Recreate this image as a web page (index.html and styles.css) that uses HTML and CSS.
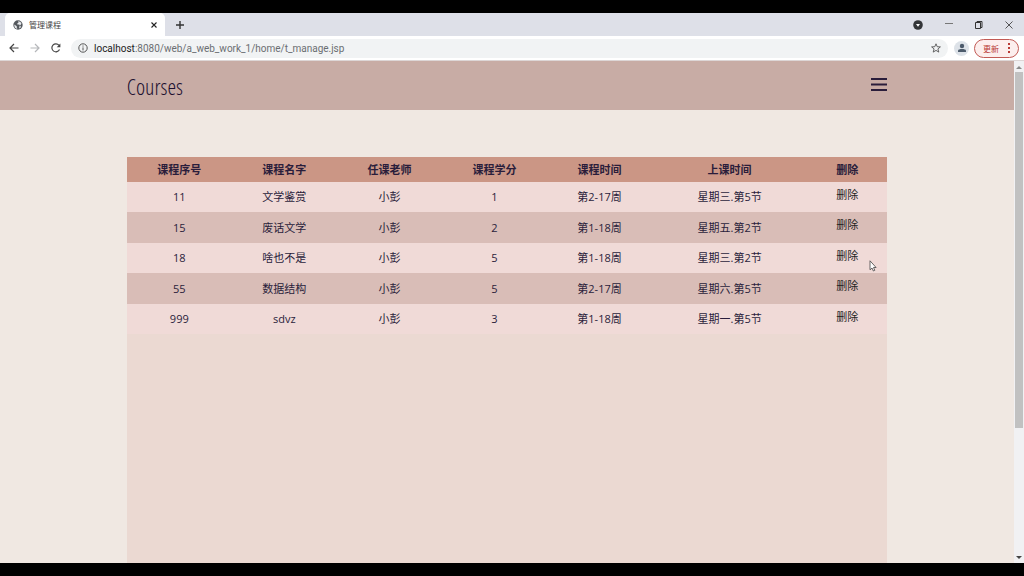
FILE: index.html
```html
<!DOCTYPE html>
<html lang="zh-CN">
<head>
  <meta charset="UTF-8">
  <title>管理课程</title>
  <link rel="stylesheet" href="styles.css">
</head>
<body>
  <!-- 标签栏 -->
  <div class="tabs">
    <div class="tab">
      <svg class="globe" viewBox="0 0 16 16"><circle cx="8" cy="8" r="7.5" fill="#54585d"/><path d="M2 7l4 3v2l1 2C4 14 2 11 2 7zM8 2c3 0 5 1.500 5.500 4L11 9l-1-2H7V5l2-1zM10 10l3 0-1.500 3H10z" fill="#e9ebee"/></svg>
      <span class="tab-title">管理课程</span>
      <button class="icon-btn" aria-label="关闭标签页"><svg width="6" height="6" viewBox="0 0 6 6"><path d="M.5.5l5 5M5.500.5l-5 5" stroke="#222" stroke-width="1.100"/></svg></button>
    </div>
    <button class="icon-btn new-tab" aria-label="新标签页"><svg width="8" height="8" viewBox="0 0 8 8"><path d="M4 0v8M0 4h8" stroke="#333" stroke-width="1.400"/></svg></button>
    <div class="window-btns">
      <button class="icon-btn" aria-label="搜索标签页"><svg width="10" height="10" viewBox="0 0 10 10"><circle cx="5" cy="5" r="4.800" fill="#333538"/><path d="M3 4h4L5 6.800z" fill="#fff"/></svg></button>
      <button class="icon-btn" aria-label="最小化"><svg width="8" height="8" viewBox="0 0 8 8"><path d="M0 2.500h8" stroke="#777"/></svg></button>
      <button class="icon-btn" aria-label="还原"><svg width="8" height="8" viewBox="0 0 8 8"><path d="M.5 1.500h5v6h-5zM2 1.500V.5h5v6H5.500" fill="none" stroke="#333"/></svg></button>
      <button class="icon-btn" aria-label="关闭"><svg width="8" height="8" viewBox="0 0 8 8"><path d="M.5.5l7 7M7.500.5l-7 7" stroke="#444" stroke-width=".9"/></svg></button>
    </div>
  </div>

  <!-- 地址栏 -->
  <div class="toolbar">
    <button class="icon-btn" aria-label="后退"><svg width="10" height="10" viewBox="0 0 10 10"><path d="M9.500 5H1M5 1L1 5l4 4" fill="none" stroke="#444" stroke-width="1.200"/></svg></button>
    <button class="icon-btn" aria-label="前进"><svg width="10" height="10" viewBox="0 0 10 10"><path d="M.5 5H9M5 1l4 4-4 4" fill="none" stroke="#b5b7ba" stroke-width="1.200"/></svg></button>
    <button class="icon-btn" aria-label="刷新"><svg width="10" height="10" viewBox="0 0 10 10"><path d="M8.500 6.500A4 4 0 1 1 8 2.300" fill="none" stroke="#444" stroke-width="1.200"/><path d="M9.400.5v3.700H5.700z" fill="#444"/></svg></button>
    <div class="address">
      <svg width="10" height="10" viewBox="0 0 10 10"><circle cx="5" cy="5" r="4.200" fill="none" stroke="#555"/><path d="M5 4.400v3M5 2.500v1.100" stroke="#555"/></svg>
      <a class="url" href="#"><span class="host">localhost</span>:8080/web/a_web_work_1/home/t_manage.jsp</a>
      <button class="icon-btn" aria-label="收藏"><svg width="10" height="10" viewBox="0 0 10 10"><path d="M5 .8l1.200 2.900 3.200.2-2.500 2 .9 3.200L5 7.400 2.200 9.100l.9-3.200-2.500-2 3.200-.2z" fill="none" stroke="#555" stroke-width=".9"/></svg></button>
    </div>
    <button class="icon-btn avatar" aria-label="用户"><svg width="10" height="10" viewBox="0 0 10 10"><circle cx="5" cy="3" r="2.200" fill="#4c5a6b"/><path d="M1 9V7.500C1 5.500 9 5.500 9 7.500V9z" fill="#4c5a6b"/></svg></button>
    <button class="update">更新<svg width="2" height="10" viewBox="0 0 2 10"><path d="M0 0h2v2H0zM0 4h2v2H0zM0 8h2v2H0z" fill="#b93a35"/></svg></button>
  </div>

  <div class="view">
    <div class="page">
      <header class="header">
        <div class="inner">
          <h1>Courses</h1>
          <button class="icon-btn" aria-label="菜单"><svg width="16" height="15" viewBox="0 0 16 15"><path d="M0 1h16M0 6.500h16M0 12h16" stroke="#2a1d3b" stroke-width="1.800"/></svg></button>
        </div>
      </header>
      <main class="content">
        <table>
          <colgroup>
            <col class="col" span="5">
            <col class="col-time">
            <col class="col-del">
          </colgroup>
          <thead>
            <tr><th>课程序号</th><th>课程名字</th><th>任课老师</th><th>课程学分</th><th>课程时间</th><th>上课时间</th><th>删除</th></tr>
          </thead>
          <tbody>
            <tr><td>11</td><td>文学鉴赏</td><td>小彭</td><td>1</td><td>第2-17周</td><td>星期三.第5节</td><td class="del"><a href="#">删除</a></td></tr>
            <tr><td>15</td><td>废话文学</td><td>小彭</td><td>2</td><td>第1-18周</td><td>星期五.第2节</td><td class="del"><a href="#">删除</a></td></tr>
            <tr><td>18</td><td>啥也不是</td><td>小彭</td><td>5</td><td>第1-18周</td><td>星期三.第2节</td><td class="del"><a href="#">删除</a></td></tr>
            <tr><td>55</td><td>数据结构</td><td>小彭</td><td>5</td><td>第2-17周</td><td>星期六.第5节</td><td class="del"><a href="#">删除</a></td></tr>
            <tr><td>999</td><td>sdvz</td><td>小彭</td><td>3</td><td>第1-18周</td><td>星期一.第5节</td><td class="del"><a href="#">删除</a></td></tr>
          </tbody>
        </table>
      </main>
    </div>
    <div class="scrollbar">
      <svg width="6" height="4" viewBox="0 0 6 4"><path d="M0 4l3-3 3 3z" fill="#8a8a8a"/></svg>
      <div class="track"><div class="thumb"></div></div>
      <svg width="6" height="4" viewBox="0 0 6 4"><path d="M0 0h6L3 3z" fill="#444"/></svg>
    </div>
  </div>

  <svg class="cursor" viewBox="0 0 8 12"><path d="M1 .8v9l2-1.800 1.400 3 1.400-.7-1.300-2.800h2.600z" fill="#fff" stroke="#444" stroke-width=".8"/></svg>
</body>
</html>
```
FILE: styles.css
```css
* { box-sizing: border-box; }
body {
  margin: 0;
  height: 100vh;
  display: flex;
  flex-direction: column;
  border-top: 13px solid #000;
  border-bottom: 13px solid #000;
  background: #fff;
  font-family: "Open Sans", "Noto Sans CJK SC", sans-serif;
  font-size: 11px;
  color: #2a1d3b;
  overflow: hidden;
}
a { color: inherit; text-decoration: none; }
svg { display: block; flex: none; }
button { font-family: inherit; cursor: pointer; }
.icon-btn { background: none; border: none; padding: 0; }

/* 标签栏 */
.tabs { display: flex; align-items: center; height: 23px; padding-left: 5px; background: #dee0e8; }
.tab {
  display: flex;
  align-items: center;
  gap: 6px;
  width: 160px;
  height: 23px;
  padding: 0 8px;
  background: #fff;
  border-radius: 5px 5px 0 0;
}
.globe { width: 10px; height: 10px; }
.tab-title { flex: 1; font-size: 8px; color: #444; }
.new-tab { margin-left: 11px; }
.window-btns { display: flex; align-items: center; gap: 22px; margin-left: auto; padding-right: 11px; }

/* 地址栏 */
.toolbar { display: flex; align-items: center; gap: 11px; height: 24px; padding: 0 5px 0 9px; background: #fff; }
.address {
  flex: 1;
  display: flex;
  align-items: center;
  gap: 6px;
  height: 19px;
  margin-left: -1px;
  padding: 0 7px;
  background: #f1f3f4;
  border-radius: 10px;
}
.url { flex: 1; font-family: Roboto, "Open Sans", sans-serif; font-size: 10px; color: #6b6e72; }
.host { color: #222; }
.avatar { display: flex; align-items: center; justify-content: center; width: 15px; height: 15px; margin-left: -5px; border-radius: 50%; background: #dde2e8; }
.update {
  display: flex;
  align-items: center;
  justify-content: space-between;
  width: 45px;
  height: 19px;
  margin-left: -6px;
  padding: 0 8px;
  border: 1px solid #c25a55;
  border-radius: 10px;
  background: #fceeed;
  color: #b93a35;
  font-size: 8px;
}

/* 页面 */
.view { flex: 1; display: flex; min-height: 0; border-top: 1px solid #ddd6d6; }
.page { flex: 1; display: flex; flex-direction: column; background: #f0e8e2; }
.inner, .content { width: 75%; margin: 0 auto; }
.header { background: #c8aca5; }
.inner { display: flex; align-items: center; justify-content: space-between; height: 49px; }
h1 { margin: 0; font-family: "Open Sans Condensed Light", "Liberation Sans Narrow", sans-serif; font-size: 22px; line-height: 24px; color: #1d1030; font-weight: 300; }
.content { flex: 1; margin-top: 47px; background: #ebd9d2; }

table { width: 100%; table-layout: fixed; border-collapse: collapse; text-align: center; line-height: 16px; }
.col { width: 105px; }
.col-time { width: 155px; }
.col-del { width: 80px; }
th, td { padding: 0; }
th { height: 25px; background: #cb9685; font-weight: 700; }
td { height: 30px; background: #f0dad7; }
tr:nth-child(even) td { height: 31px; background: #d9bdb7; }
.del { padding-top: 5px; vertical-align: top; color: #222; }

/* 滚动条 */
.scrollbar { display: flex; flex-direction: column; align-items: center; width: 10px; padding: 4px 0 3px; background: #f1f1f3; }
.track { flex: 1; width: 8px; margin: 3px 0; }
.thumb { height: 74%; background: #c1c1c1; }

.cursor { position: absolute; left: 869px; top: 260px; width: 8px; height: 12px; }
```
